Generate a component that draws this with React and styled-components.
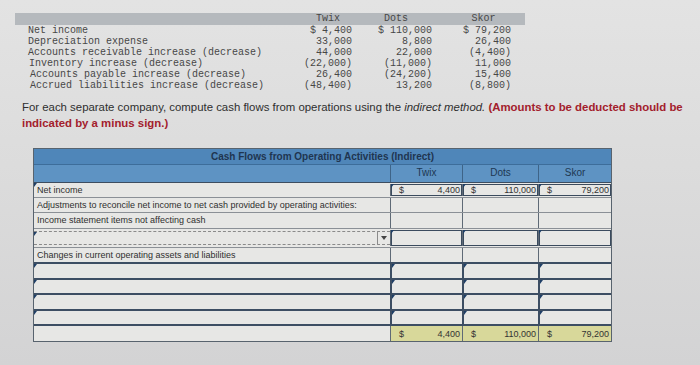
import React from 'react';
import styled, { createGlobalStyle } from 'styled-components';

const GlobalStyle = createGlobalStyle`
    html, body {
        margin: 0;
        padding: 0;
    }
    body {
        background: linear-gradient(180deg, #e3e3e3 0%, #dcdcdc 45%, #d3d3d4 100%);
        font-family: "Liberation Sans", Arial, sans-serif;
        width: 700px;
        height: 365px;
        overflow: hidden;
    }
`

const Page = styled.div`
    display: flex;
    flex-direction: column;
    padding-top: 13px;
`

/* ---------- given data (monospace listing) ---------- */

const DataTable = styled.div`
    margin-left: 15px;
    width: 510px;
    font-family: "Liberation Mono", "DejaVu Sans Mono", monospace;
    font-size: 10px;
    color: #474747;
`

const DataRow = styled.div`
    display: grid;
    grid-template-columns: 285px 56px 80px 79px 10px;
    height: ${p => p.$head ? '12px' : '11px'};
    line-height: ${p => p.$head ? '12px' : '11px'};
    background: ${p => p.$head ? '#b5b9bd' : 'transparent'};
`

const DataLabel = styled.span`
    padding-left: ${p => p.$indent || 13}px;
    white-space: pre;
`

const DataValue = styled.span`
    text-align: ${p => p.$head ? 'center' : 'right'};
    padding-right: ${p => p.$head ? 0 : 4}px;
    padding-left: ${p => p.$shift || 0}px;
    white-space: pre;
`

/* ---------- instructions ---------- */

const Prompt = styled.div`
    margin: 8px 0 0 22px;
    width: 668px;
    font-size: 11.4px;
    line-height: 16px;
    color: #2e2e2e;
`

const PromptLine = styled.div`
    white-space: nowrap;
    em { font-style: italic; }
`

const Warn = styled.strong`
    color: #a3202c;
    font-weight: bold;
`

/* ---------- worksheet ---------- */

const Sheet = styled.div`
    margin: 17px 0 0 33px;
    width: 577px;
    border: 1px solid #58636e;
    font-size: 9px;
    color: #2f2f2f;
`

const COLS = '356px 72px 76px 73px';

const TitleBar = styled.div`
    height: 15px;
    line-height: 15px;
    background: #4f86b9;
    text-align: center;
    font-weight: bold;
    font-size: 10px;
    color: #1f3550;
    border-bottom: 1px solid #3d6d9a;
`

const HeadRow = styled.div`
    display: grid;
    grid-template-columns: ${COLS};
    height: 17px;
    background: #5e93c3;
    border-bottom: 1px solid #3d4d60;
`

const HeadCell = styled.div`
    text-align: center;
    line-height: 16px;
    font-size: 10px;
    color: #203852;
    border-left: ${p => p.$first ? 'none' : '1px solid #3e6488'};
`

const Row = styled.div`
    display: grid;
    grid-template-columns: ${COLS};
    height: ${p => p.$h || 14}px;
    background: #e7e7e5;
    border-bottom: ${p => p.$line || '1px solid #8b9096'};
`

const Label = styled.div`
    position: relative;
    padding-left: 3px;
    line-height: ${p => p.$h || 14}px;
    white-space: nowrap;
    overflow: hidden;
    border-top: ${p => p.$dashed ? '1px dashed #8a8a8a' : 'none'};
    border-bottom: ${p => p.$dashed ? '1px dashed #8a8a8a' : 'none'};
    margin: ${p => p.$dashed ? '2px 0' : '0'};
`

const Flag = styled.span`
    position: absolute;
    left: 0;
    top: 0;
    width: 0;
    height: 0;
    border-top: 4px solid #1f3f66;
    border-right: 3px solid transparent;
`

const Select = styled.div`
    position: absolute;
    right: 0;
    top: -1px;
    bottom: -1px;
    width: 12px;
    border-left: 1px solid #8a8a8a;
    display: flex;
    align-items: center;
    justify-content: center;
    &:after {
        content: "";
        border-top: 4px solid #444;
        border-left: 3px solid transparent;
        border-right: 3px solid transparent;
    }
`

const Cell = styled.div`
    position: relative;
    display: flex;
    justify-content: space-between;
    align-items: center;
    padding: 0 2px 0 8px;
    border-left: ${p => p.$heavy ? '2px solid #3d4e63' : '1px solid #5f6a76'};
    background: ${p => p.$total ? '#d8d89a' : 'transparent'};
    box-shadow: ${p => p.$box ? 'inset 0 0 0 1px #3b4b5e' : 'none'};
    margin: ${p => p.$box ? '1px 0' : '0'};
    color: #333;
`

const Money = ({ value, total, box = true }) => (
    <Cell $box={box} $total={total}>
        {!total && <Flag />}
        <span>$</span>
        <span>{value}</span>
    </Cell>
)

const Blank = ({ input, heavy }) => (
    <Cell $box={input && !heavy} $heavy={heavy}>
        {(input || heavy) && <Flag />}
    </Cell>
)

const given = [
    ['Net income', '$ 4,400', '$ 110,000', '$ 79,200', 13],
    ['Depreciation expense', '33,000', '8,800', '26,400', 13],
    ['Accounts receivable increase (decrease)', '44,000', '22,000', '(4,400)', 13],
    ['Inventory increase (decrease)', '(22,000)', '(11,000)', '11,000', 14],
    ['Accounts payable increase (decrease)', '26,400', '(24,200)', '15,400', 15],
    ['Accrued liabilities increase (decrease)', '(48,400)', '13,200', '(8,800)', 15],
]

const heavy = '2px solid #3d4e63';
const inputHeights = [14, 13, 14, 13];

const App = () => {
    return (
        <>
            <GlobalStyle />
            <Page>
                <DataTable>
                    <DataRow $head>
                        <span />
                        <DataValue $head>Twix</DataValue>
                        <DataValue $head>Dots</DataValue>
                        <DataValue $head $shift={16}>Skor</DataValue>
                        <span />
                    </DataRow>
                    {given.map(([label, a, b, c, indent]) => (
                        <DataRow key={label}>
                            <DataLabel $indent={indent}>{label}</DataLabel>
                            <DataValue>{a}</DataValue>
                            <DataValue>{b}</DataValue>
                            <DataValue>{c}</DataValue>
                            <span />
                        </DataRow>
                    ))}
                </DataTable>

                <Prompt>
                    <PromptLine>
                        <span>For each separate company, compute cash flows from operations using the </span>
                        <em>indirect method.</em>{' '}
                        <Warn>(Amounts to be deducted should be</Warn>
                    </PromptLine>
                    <PromptLine>
                        <Warn>indicated by a minus sign.)</Warn>
                    </PromptLine>
                </Prompt>

                <Sheet>
                    <TitleBar>Cash Flows from Operating Activities (Indirect)</TitleBar>
                    <HeadRow>
                        <HeadCell $first />
                        <HeadCell>Twix</HeadCell>
                        <HeadCell>Dots</HeadCell>
                        <HeadCell>Skor</HeadCell>
                    </HeadRow>

                    <Row>
                        <Label><Flag />Net income</Label>
                        <Money value="4,400" />
                        <Money value="110,000" />
                        <Money value="79,200" />
                    </Row>
                    <Row>
                        <Label>Adjustments to reconcile net income to net cash provided by operating activities:</Label>
                        <Blank /><Blank /><Blank />
                    </Row>
                    <Row $h={15}>
                        <Label $h={15}>Income statement items not affecting cash</Label>
                        <Blank /><Blank /><Blank />
                    </Row>
                    <Row $h={18}>
                        <Label $dashed $h={12}><Flag /><Select /></Label>
                        <Blank input /><Blank input /><Blank input />
                    </Row>
                    <Row $line={heavy}>
                        <Label>Changes in current operating assets and liabilities</Label>
                        <Blank /><Blank /><Blank />
                    </Row>
                    {inputHeights.map((h, i) => (
                        <Row key={i} $h={h} $line={heavy}>
                            <Label $h={h}><Flag /></Label>
                            <Blank heavy /><Blank heavy /><Blank heavy />
                        </Row>
                    ))}
                    <Row $h={15} $line="none">
                        <Label />
                        <Money value="4,400" total box={false} />
                        <Money value="110,000" total box={false} />
                        <Money value="79,200" total box={false} />
                    </Row>
                </Sheet>
            </Page>
        </>
    );
}

export default App;
